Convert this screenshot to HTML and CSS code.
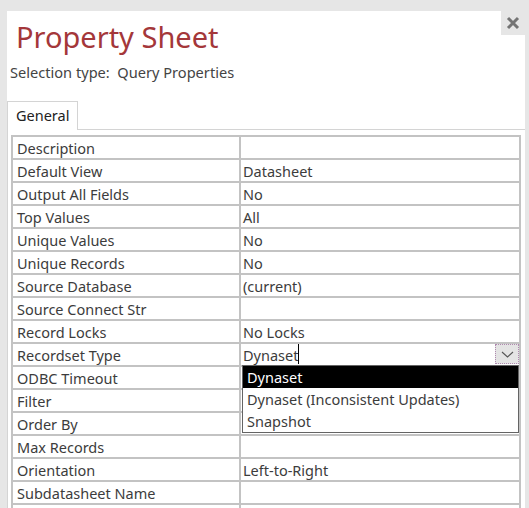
FILE: index.html
```html
<!DOCTYPE html>
<html>
<head>
<meta charset="utf-8">
<link rel="stylesheet" href="styles.css">
</head>
<body>
<div class="panel">
  <div class="head">
    <h1 class="title">Property Sheet</h1>
    <button class="close" aria-label="Close">
      <svg width="14" height="14" viewBox="0 0 14 14"><path d="M2 2 L12 12 M12 2 L2 12" stroke="#747474" stroke-width="3" fill="none"/></svg>
    </button>
  </div>
  <div class="seltype">Selection type:&nbsp; Query Properties</div>
  <div class="tabs"><div class="tab">General</div></div>
  <div class="tabbody">
    <div class="grid">
      <div class="cell">Description</div><div class="cell val"></div>
      <div class="cell">Default View</div><div class="cell val">Datasheet</div>
      <div class="cell">Output All Fields</div><div class="cell val">No</div>
      <div class="cell">Top Values</div><div class="cell val">All</div>
      <div class="cell">Unique Values</div><div class="cell val">No</div>
      <div class="cell">Unique Records</div><div class="cell val">No</div>
      <div class="cell">Source Database</div><div class="cell val">(current)</div>
      <div class="cell">Source Connect Str</div><div class="cell val"></div>
      <div class="cell">Record Locks</div><div class="cell val">No Locks</div>
      <div class="cell">Recordset Type</div>
      <div class="cell val combo">
        <span class="combotext">Dynaset</span><span class="caret"></span>
        <span class="dropbtn"><svg width="13" height="7" viewBox="0 0 13 7"><path d="M1 1 L6.5 6 L12 1" stroke="#555" stroke-width="1.1" fill="none"/></svg></span>
        <div class="list">
          <div class="item sel">Dynaset</div>
          <div class="item">Dynaset (Inconsistent Updates)</div>
          <div class="item">Snapshot</div>
        </div>
      </div>
      <div class="cell">ODBC Timeout</div><div class="cell val"></div>
      <div class="cell">Filter</div><div class="cell val"></div>
      <div class="cell">Order By</div><div class="cell val"></div>
      <div class="cell">Max Records</div><div class="cell val"></div>
      <div class="cell">Orientation</div><div class="cell val">Left-to-Right</div>
      <div class="cell">Subdatasheet Name</div><div class="cell val"></div>
      <div class="cell"></div><div class="cell val"></div>
    </div>
  </div>
</div>
</body>
</html>
```
FILE: styles.css
```css
html, body {
  margin: 0;
  padding: 0;
}
body {
  width: 529px;
  height: 508px;
  overflow: hidden;
  background: #e6e6e6;
  font-family: "Noto Sans", "Open Sans", sans-serif;
  color: #3c3c3c;
}
.panel {
  margin: 11px 4px 0 7px;
  background: #ffffff;
  height: 497px;
  overflow: hidden;
}
.head {
  display: flex;
  justify-content: space-between;
  align-items: flex-start;
  height: 45px;
}
.title {
  margin: 0;
  padding: 6px 0 0 9px;
  font-size: 29px;
  line-height: 40px;
  font-weight: normal;
  color: #a4373a;
}
.close {
  width: 24px;
  height: 24px;
  border: none;
  padding: 0;
  margin: 0;
  background: #e6e6e6;
  display: flex;
  align-items: center;
  justify-content: center;
}
.seltype {
  margin-top: 7px;
  padding-left: 3px;
  font-size: 14.6px;
  line-height: 18px;
  color: #444;
}
.tabs {
  margin-top: 20px;
  display: flex;
}
.tab {
  position: relative;
  background: #fff;
  border: 1px solid #d4d4d4;
  border-bottom: none;
  height: 28px;
  margin-bottom: -1px;
  padding: 0 8px 0 8px;
  width: 53px;
  font-size: 14.5px;
  line-height: 27px;
  color: #222;
}
.tabbody {
  border: 1px solid #d4d4d4;
  border-bottom: none;
  width: 514px;
  height: 400px;
  padding: 5px 0 0 3px;
  box-sizing: content-box;
}
.grid {
  display: grid;
  grid-template-columns: 226px 278px;
  grid-auto-rows: 21px;
  gap: 2px;
  padding: 2px;
  background: #c3c3c3;
  width: 506px;
}
.cell {
  background: #fff;
  padding-left: 4px;
  font-size: 14.5px;
  line-height: 23px;
  white-space: nowrap;
}
.cell.val {
  padding-left: 2px;
}
.combo {
  position: relative;
  display: flex;
  align-items: flex-start;
}
.caret {
  width: 1px;
  height: 20px;
  background: #000;
}
.dropbtn {
  margin-left: auto;
  width: 22px;
  height: 18px;
  border: 1px dotted #b08ab0;
  background: #e4e4e4;
  display: flex;
  align-items: center;
  justify-content: center;
}
.list {
  position: absolute;
  top: 21px;
  left: 1px;
  width: 275px;
  border: 1px solid #646464;
  background: #fff;
  z-index: 2;
}
.item {
  height: 22px;
  line-height: 23px;
  padding-left: 4px;
  font-size: 14.5px;
  color: #3c3c3c;
}
.item.sel {
  background: #000;
  color: #fff;
}
```
